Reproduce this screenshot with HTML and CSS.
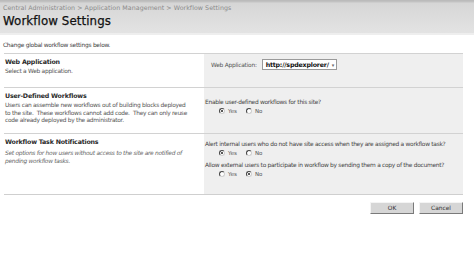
FILE: index.html
```html
<!DOCTYPE html>
<html>
<head>
<meta charset="utf-8">
<link rel="stylesheet" href="styles.css">
</head>
<body>
<div class="header">
  <div class="crumb">Central Administration &gt; Application Management &gt; Workflow Settings</div>
  <div class="title">Workflow Settings</div>
</div>
<div class="intro">Change global workflow settings below.</div>
<div class="form">
  <div class="row row1">
    <div class="left">
      <div class="head">Web Application</div>
      <div class="desc">Select a Web application.</div>
    </div>
    <div class="right">
      <div class="webapp">
        <span class="lbl">Web Application:</span>
        <span class="select"><b>http://spdexplorer/</b><span class="arr">▾</span></span>
      </div>
    </div>
  </div>
  <div class="row row2">
    <div class="left">
      <div class="head">User-Defined Workflows</div>
      <div class="desc">Users can assemble new workflows out of building blocks deployed to the site.&nbsp; These workflows cannot add code.&nbsp; They can only reuse code already deployed by the administrator.</div>
    </div>
    <div class="right">
      <div class="q">Enable user-defined workflows for this site?</div>
      <div class="opts"><span class="radio on"></span><span class="opt">Yes</span><span class="radio"></span><span class="opt">No</span></div>
    </div>
  </div>
  <div class="row row3">
    <div class="left">
      <div class="head">Workflow Task Notifications</div>
      <div class="desc">Set options for how users without access to the site are notified of pending workflow tasks.</div>
    </div>
    <div class="right">
      <div class="q">Alert internal users who do not have site access when they are assigned a workflow task?</div>
      <div class="opts"><span class="radio on"></span><span class="opt">Yes</span><span class="radio"></span><span class="opt">No</span></div>
      <div class="q q2">Allow external users to participate in workflow by sending them a copy of the document?</div>
      <div class="opts"><span class="radio"></span><span class="opt">Yes</span><span class="radio on"></span><span class="opt">No</span></div>
    </div>
  </div>
</div>
<div class="buttons">
  <span class="btn">OK</span>
  <span class="btn">Cancel</span>
</div>
</body>
</html>
```
FILE: styles.css
```css
html, body {
  margin: 0;
  padding: 0;
  background: #ffffff;
  font-family: "DejaVu Sans", Verdana, sans-serif;
  color: #444;
}
.header {
  height: 33px;
  padding-left: 3px;
  background: linear-gradient(#b8b8b8 0px, #c4c4c4 2px, #d6d6d6 3px, #e3e3e3 33px);
  border-bottom: 2px solid #eeeeee;
}
.crumb {
  padding-top: 4px;
  font-size: 6.3px;
  line-height: 8px;
  color: #8a8a8a;
  letter-spacing: 0.05px;
}
.title {
  margin-top: 1px;
  font-size: 11.8px;
  line-height: 16px;
  color: #111;
  letter-spacing: 0.1px;
  -webkit-text-stroke: 0.25px #111;
}
.intro {
  padding: 6px 0 0 3px;
  height: 12px;
  font-size: 5.9px;
  line-height: 8px;
  color: #3c3c3c;
  letter-spacing: -0.25px;
}
.form {
  margin-left: 4px;
  width: 459px;
  border-bottom: 1px solid #cfcfcf;
}
.row {
  display: grid;
  grid-template-columns: 200px 259px;
  border-top: 1px solid #d2d2d2;
}
.row1 { height: 33px; }
.row2 { height: 45px; }
.row3 { height: 60px; }
.left {
  padding: 3px 0 0 1px;
}
.right {
  background: #efefef;
  padding: 2px 0 0 0;
}
.head {
  font-weight: bold;
  font-size: 6.3px;
  line-height: 9px;
  color: #2a2a2a;
  letter-spacing: -0.2px;
}
.desc {
  margin-top: 2px;
  width: 187px;
  font-size: 5.9px;
  line-height: 7.5px;
  color: #555;
  letter-spacing: -0.28px;
}
.row3 .desc { margin-top: 4px; color: #666; font-style: italic; }
.webapp {
  display: flex;
  align-items: center;
  padding: 3px 0 0 7px;
}
.lbl {
  font-size: 5.9px;
  color: #555;
  letter-spacing: -0.25px;
}
.select {
  margin-left: 5px;
  display: inline-flex;
  align-items: center;
  height: 9px;
  padding: 0 2px 0 3px;
  background: #fff;
  border: 1px solid #9a9a9a;
  font-size: 6.3px;
  color: #111;
  letter-spacing: -0.2px;
}
.arr {
  margin-left: 3px;
  font-size: 5px;
  color: #666;
}
.q {
  font-size: 5.9px;
  line-height: 8px;
  color: #444;
  padding-left: 1px;
  letter-spacing: -0.28px;
  white-space: nowrap;
}
.row2 .q { margin-top: 8px; }
.row3 .q { margin-top: 4px; }
.row3 .q2 { margin-top: 3px; }
.opts {
  display: flex;
  align-items: center;
  height: 9px;
  padding-left: 15px;
}
.row3 .opts { height: 10px; }
.radio {
  width: 4px;
  height: 4px;
  border-radius: 50%;
  border: 1px solid;
  border-color: #444 #cfcfcf #cfcfcf #444;
  background: #fff;
  position: relative;
}
.radio.on::after {
  content: "";
  position: absolute;
  left: 1px;
  top: 1px;
  width: 2px;
  height: 2px;
  border-radius: 50%;
  background: #222;
}
.opt {
  font-size: 5.5px;
  color: #555;
  margin: 0 9px 0 3px;
}
.buttons {
  display: flex;
  justify-content: flex-end;
  gap: 5px;
  width: 463px;
  margin-top: 7px;
}
.btn {
  width: 42px;
  height: 10px;
  display: flex;
  align-items: center;
  justify-content: center;
  background: #d6d6d6;
  border: 1px solid;
  border-color: #f4f4f4 #7a7a7a #7a7a7a #f4f4f4;
  font-size: 5.9px;
  color: #333;
}
```
